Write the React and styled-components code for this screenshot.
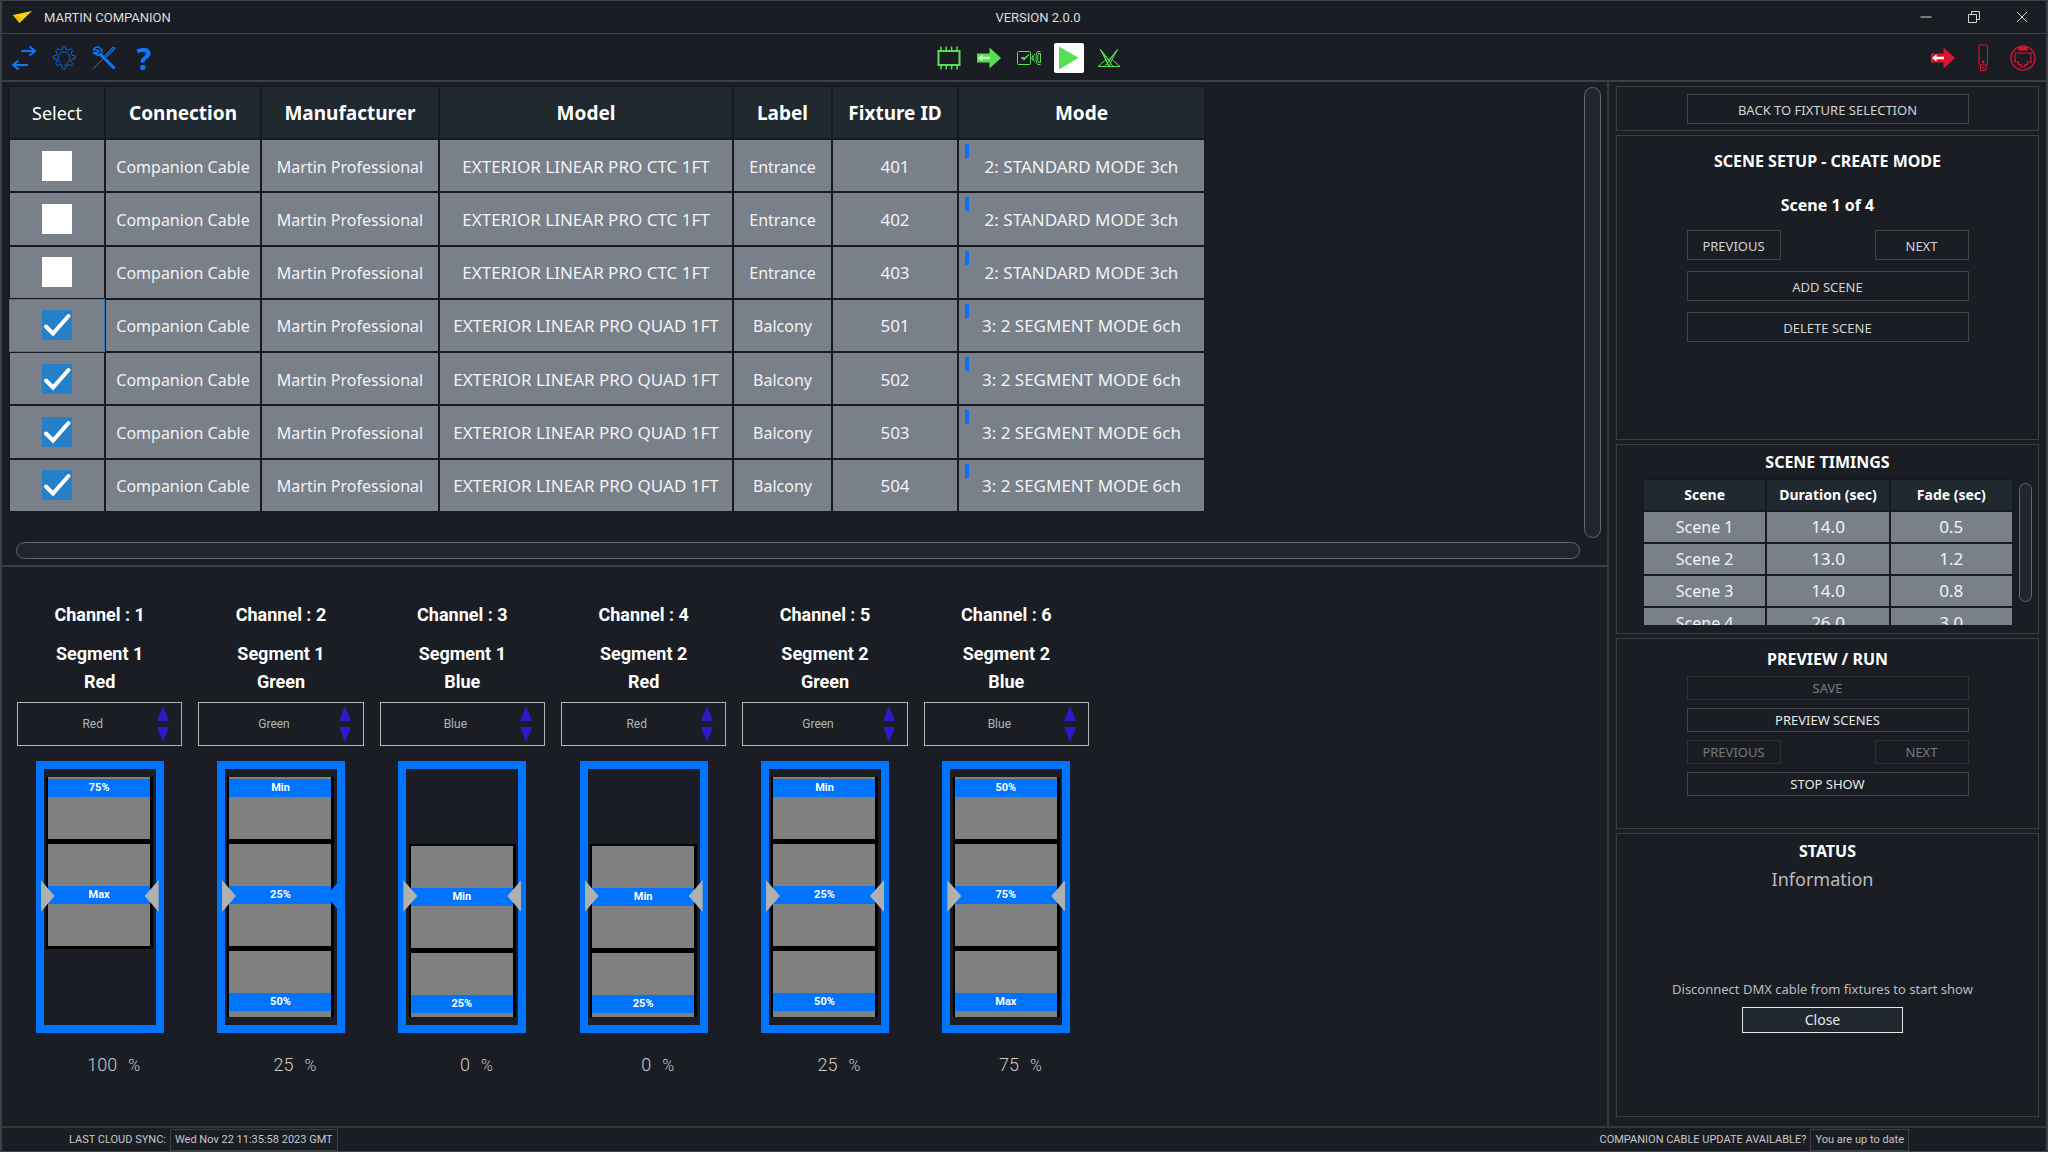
import React, { useState } from 'react'
import styled, { createGlobalStyle } from 'styled-components'

const fixtureColumns = [
  { name: 'Connection', width: 154 },
  { name: 'Manufacturer', width: 176 },
  { name: 'Model', width: 292 },
  { name: 'Label', width: 97 },
  { name: 'Fixture ID', width: 124 },
  { name: 'Mode', width: 245 },
]

const ctc = { model: 'EXTERIOR LINEAR PRO CTC 1FT', label: 'Entrance', mode: '2: STANDARD MODE 3ch' }
const quad = { model: 'EXTERIOR LINEAR PRO QUAD 1FT', label: 'Balcony', mode: '3: 2 SEGMENT MODE 6ch' }

const fixtures = [
  { id: 401, ...ctc },
  { id: 402, ...ctc },
  { id: 403, ...ctc },
  { id: 501, ...quad },
  { id: 502, ...quad },
  { id: 503, ...quad },
  { id: 504, ...quad },
]

const channels = [
  { no: 1, segment: 1, color: 'Red', value: 100, steps: ['75%', 'Max', null] },
  { no: 2, segment: 1, color: 'Green', value: 25, steps: ['Min', '25%', '50%'], active: true },
  { no: 3, segment: 1, color: 'Blue', value: 0, steps: [null, 'Min', '25%'] },
  { no: 4, segment: 2, color: 'Red', value: 0, steps: [null, 'Min', '25%'] },
  { no: 5, segment: 2, color: 'Green', value: 25, steps: ['Min', '25%', '50%'] },
  { no: 6, segment: 2, color: 'Blue', value: 75, steps: ['50%', '75%', 'Max'] },
]

const timings = [
  { name: 'Scene 1', duration: '14.0', fade: '0.5' },
  { name: 'Scene 2', duration: '13.0', fade: '1.2' },
  { name: 'Scene 3', duration: '14.0', fade: '0.8' },
  { name: 'Scene 4', duration: '26.0', fade: '3.0' },
]

const SwapIcon = () => (
  <Icon viewBox="0 0 24 24" strokeWidth="2">
    <path d="M9 5h14M17.500 0.500 23 5l-5.500 4.500M16 19H1.500M6.500 14.500 1 19l5.500 4.500" />
  </Icon>
)

const GearIcon = () => (
  <Icon viewBox="0 0 24 24" strokeWidth="1" opacity="0.85">
    <path d="M10.200 3.200 10.800.4h2.600l.6 2.800 2.400 1 2.200-1.500 1.900 1.900-1.300 2.400 1 2.400 3 .6v2.600l-3 .6-1 2.400 1.500 2.400-1.900 1.900-2.400-1.500-1.800.8-.4 2.400-2.400 2-2-2.400.4-1.800-2-1.200-2.600 1.500-1.900-1.900 1.500-2.400-1-2.400-2.900-.6V10l2.900-.6 1-2.400-1.500-2.400 1.900-1.900 2.400 1.500z" />
    <path d="M8.500 16.800a6 6 0 1 1 6 .6l-2.500 2.600" />
  </Icon>
)

const ToolsIcon = () => (
  <Icon viewBox="0 0 24 24">
    <path d="M8 8 22.500 22.500" strokeWidth="3" />
    <path d="M1.500 3.500 3.500 1.500 6.500 0.800 10 4 9.500 8 6 9.500 1 6.500l4.500.500L7 5z" strokeWidth="1.500" />
    <path d="M1 23 12 12" strokeWidth="1" />
    <path d="M13 9.500 20.500 1.500l2.200-.3-.2 2.300-8 7.500z" strokeWidth="1" fill="#0b4fa8" />
  </Icon>
)

const ChipIcon = () => (
  <Icon viewBox="0 0 24 24" strokeWidth="2">
    <rect x="1.500" y="5" width="21" height="14" />
    <path d="M4 0.500V5M9.300 0.500V5M14.600 0.500V5M20 0.500V5M4 19v4.500M9.300 19v4.500M14.600 19v4.500M20 19v4.500" strokeWidth="1.500" />
  </Icon>
)

const ArrowIcon = ({ tail }) => (
  <Icon viewBox="0 0 24 24" stroke="none">
    <path d="M0 7.500h12.500V1.500L24 12 12.500 22.500v-6H0z" fill="currentColor" />
    <path d="M1 12 5.500 8.500v2.300H13v2.400H5.500v2.300z" fill={tail} />
  </Icon>
)

const CameraIcon = () => (
  <Icon viewBox="0 0 24 24" strokeWidth="1">
    <rect x="0.500" y="5.500" width="13" height="13" rx="1" />
    <path d="M4 11.500 7 14l5-5.500L7.500 12z" fill="currentColor" />
    <path d="M18 8a5 5 0 0 0 0 8M15.800 9.500a4 4 0 0 0 0 5M23.500 5.500h-3c-2 3.500-2 9.500 0 13h3M23.500 7.500h-2c-1 3-1 6 0 9h2z" />
  </Icon>
)

const PlayIcon = () => (
  <Icon viewBox="0 0 24 24" stroke="none">
    <path d="M2 0.500 21.500 11.800 2 23.500z" fill="currentColor" />
  </Icon>
)

const BeamIcon = () => (
  <Icon viewBox="0 0 24 24" strokeWidth="1">
    <path d="M3.500 3.500 16 20.500H8L20.500 3.500 15 13.500l8 7H12zM20.500 3.500 12 14 3.500 3.500 9 13.500l-8 7h7M16 20.500h7M9 13.500l3 7 3-7" />
  </Icon>
)

const UsbIcon = () => (
  <Icon viewBox="0 0 24 24" strokeWidth="1">
    <rect x="8" y="-1" width="8.500" height="20" rx="1" />
    <path d="M9.500 19v5.500h5.500V19M11 22h2.500" />
    <circle cx="12.200" cy="16" r="1" fill="currentColor" />
  </Icon>
)

const EthernetIcon = () => (
  <Icon viewBox="0 0 24 24" strokeWidth="1.200">
    <circle cx="12" cy="12" r="12" />
    <path d="M4 7h16v9h-3.500v2.500h-2.500V21h-4v-2.500H7.500V16H4z" />
    <path d="M8 1h8v3H8z" fill="currentColor" />
  </Icon>
)

const Channel = ({ channel }) => {
  const [color, setColor] = useState(channel.color)
  const name = `Channel : ${channel.no}`
  return (
    <ChannelBox>
      <ChannelName>{name}</ChannelName>
      <SegmentName>Segment {channel.segment}<br />{channel.color}</SegmentName>
      <ColorPick>
        <ColorSelect aria-label={`${name} color`} value={color} onChange={(e) => setColor(e.target.value)}>
          <option>Red</option>
          <option>Green</option>
          <option>Blue</option>
        </ColorSelect>
        <Arrows viewBox="0 0 12 36">
          <path d="M6 0 12 15H0zM6 36 0 21h12z" fill="#2a1bcb" />
        </Arrows>
      </ColorPick>
      <Wheel>
        <WheelTrack $atMin={channel.value === 0}>
          {channel.steps.map((step, i) => (
            <Step key={i} $empty={!step}>{step && <StepLabel>{step}</StepLabel>}</Step>
          ))}
        </WheelTrack>
        <WheelInput type="range" aria-label={`${name} level`} defaultValue={channel.value} />
        <Pointer />
        <Pointer $right $active={channel.active} />
      </Wheel>
      <Level>
        <span>{channel.value}</span>
        <Percent>%</Percent>
      </Level>
    </ChannelBox>
  )
}

const App = () => {
  const [selected, setSelected] = useState([501, 502, 503, 504])

  const toggle = (id) => {
    setSelected(selected.includes(id) ? selected.filter((el) => el !== id) : [...selected, id])
  }

  return (
    <>
      <GlobalStyle />
      <Window>
        <TitleBar>
          <Brand>
            <Logo viewBox="0 0 19 12">
              <path d="M0 4 19 0 6.500 12z" fill="#fbd20b" />
              <path d="M0 4 8 6.500 6.500 12z" fill="#eeb60c" />
            </Logo>
            MARTIN COMPANION
          </Brand>
          <Version>VERSION 2.0.0</Version>
          <WindowControls>
            <WindowButton aria-label="Minimize">
              <ControlIcon viewBox="0 0 12 12"><path d="M0.500 6h11" /></ControlIcon>
            </WindowButton>
            <WindowButton aria-label="Restore">
              <ControlIcon viewBox="0 0 12 12"><path d="M0.500 3.500h8v8h-8zM3.500 3.500v-3h8v8h-3" /></ControlIcon>
            </WindowButton>
            <WindowButton aria-label="Close window">
              <ControlIcon viewBox="0 0 12 12"><path d="M1 1l10 10M11 1 1 11" /></ControlIcon>
            </WindowButton>
          </WindowControls>
        </TitleBar>

        <Toolbar>
          <Tools $color="#0a78ff">
            <Tool aria-label="Swap"><SwapIcon /></Tool>
            <Tool aria-label="Settings"><GearIcon /></Tool>
            <Tool aria-label="Tools"><ToolsIcon /></Tool>
            <Tool aria-label="Help"><HelpMark>?</HelpMark></Tool>
          </Tools>
          <Tools $color="#55e052" $middle>
            <Tool aria-label="Fixtures"><ChipIcon /></Tool>
            <Tool aria-label="Upload"><ArrowIcon tail="#c9f7c8" /></Tool>
            <Tool aria-label="Check fixture"><CameraIcon /></Tool>
            <Tool aria-label="Play" $on><PlayIcon /></Tool>
            <Tool aria-label="Beams"><BeamIcon /></Tool>
          </Tools>
          <Tools $color="#e0142f" $end>
            <Tool aria-label="Cable status"><ArrowIcon tail="#fff" /></Tool>
            <Tool aria-label="USB status"><UsbIcon /></Tool>
            <Tool aria-label="Network status"><EthernetIcon /></Tool>
          </Tools>
        </Toolbar>

        <Main>
          <Work>
            <FixtureArea>
              <FixtureRow>
                <FixtureTable>
                  <colgroup>
                    <col width="94" />
                    {fixtureColumns.map((el) => <col key={el.name} width={el.width} />)}
                  </colgroup>
                  <thead>
                    <tr>
                      <HeadCell $light>Select</HeadCell>
                      {fixtureColumns.map((el) => <HeadCell key={el.name}>{el.name}</HeadCell>)}
                    </tr>
                  </thead>
                  <tbody>
                    {fixtures.map((el) => (
                      <tr key={el.id}>
                        <SelectCell $focus={el.id === 501}>
                          <Check>
                            <CheckInput
                              type="checkbox"
                              aria-label={`Select fixture ${el.id}`}
                              checked={selected.includes(el.id)}
                              onChange={() => toggle(el.id)}
                            />
                            {selected.includes(el.id) && (
                              <Tick viewBox="0 0 30 30"><path d="M4 16.500 11 23.500 26.500 6" /></Tick>
                            )}
                          </Check>
                        </SelectCell>
                        <Cell>Companion Cable</Cell>
                        <Cell>Martin Professional</Cell>
                        <Cell $large>{el.model}</Cell>
                        <Cell>{el.label}</Cell>
                        <Cell $large>{el.id}</Cell>
                        <Cell $large><ModeMark />{el.mode}</Cell>
                      </tr>
                    ))}
                  </tbody>
                </FixtureTable>
                <ScrollV />
              </FixtureRow>
              <ScrollH />
            </FixtureArea>
            <Channels>
              {channels.map((el) => <Channel key={el.no} channel={el} />)}
            </Channels>
          </Work>

          <Side>
            <Panel $height={45} $top={7}>
              <Buttons>
                <Button>BACK TO FIXTURE SELECTION</Button>
              </Buttons>
            </Panel>

            <Panel $height={305} $top={13}>
              <PanelTitle>SCENE SETUP - CREATE MODE</PanelTitle>
              <SceneCount>Scene 1 of 4</SceneCount>
              <Buttons>
                <ButtonPair>
                  <Button>PREVIOUS</Button>
                  <Button>NEXT</Button>
                </ButtonPair>
                <Button>ADD SCENE</Button>
                <Button>DELETE SCENE</Button>
              </Buttons>
            </Panel>

            <Panel $height={190} $top={5}>
              <PanelTitle>SCENE TIMINGS</PanelTitle>
              <TimingRow>
                <TimingView>
                  <TimingTable>
                    <thead>
                      <tr>
                        <TimingHead>Scene</TimingHead>
                        <TimingHead>Duration (sec)</TimingHead>
                        <TimingHead>Fade (sec)</TimingHead>
                      </tr>
                    </thead>
                    <tbody>
                      {timings.map((el) => (
                        <tr key={el.name}>
                          <TimingCell>{el.name}</TimingCell>
                          <TimingCell $large>{el.duration}</TimingCell>
                          <TimingCell $large>{el.fade}</TimingCell>
                        </tr>
                      ))}
                    </tbody>
                  </TimingTable>
                </TimingView>
                <TimingScroll />
              </TimingRow>
            </Panel>

            <Panel $height={191} $top={8}>
              <PanelTitle>PREVIEW / RUN</PanelTitle>
              <Buttons $compact>
                <Button $compact disabled>SAVE</Button>
                <Button $compact $bright>PREVIEW SCENES</Button>
                <ButtonPair>
                  <Button $compact disabled>PREVIOUS</Button>
                  <Button $compact disabled>NEXT</Button>
                </ButtonPair>
                <Button $compact $bright>STOP SHOW</Button>
              </Buttons>
            </Panel>

            <Panel $grow $top={5}>
              <PanelTitle>STATUS</PanelTitle>
              <Status>
                <StatusKind>Information</StatusKind>
                <StatusText>Disconnect DMX cable from fixtures to start show</StatusText>
                <CloseButton>Close</CloseButton>
              </Status>
            </Panel>
          </Side>
        </Main>

        <Footer>
          <FootItem>LAST CLOUD SYNC: <FootValue>Wed Nov 22 11:35:58 2023 GMT</FootValue></FootItem>
          <FootItem>COMPANION CABLE UPDATE AVAILABLE? <FootValue>You are up to date</FootValue></FootItem>
        </Footer>
      </Window>
    </>
  )
}

export default App

const GlobalStyle = createGlobalStyle`
  * {
    box-sizing: border-box;
  }
  body {
    margin: 0;
    background: #1a1d23;
    color: #fff;
    font-family: Roboto, "Liberation Sans", sans-serif;
  }
  button, select {
    font: inherit;
    color: inherit;
  }
`
const Window = styled.div`
  min-height: 100vh;
  display: flex;
  flex-direction: column;
  border: solid #3d4147;
  border-width: 1px 2px;
`
const TitleBar = styled.header`
  height: 33px;
  display: grid;
  grid-template-columns: 1fr auto 1fr;
  align-items: center;
  border-bottom: 1px solid #43474c;
  font-size: 13px;
  color: #dcdddf;
`
const Brand = styled.div`
  display: flex;
  align-items: center;
  gap: 12px;
  padding-left: 11px;
`
const Logo = styled.svg`
  width: 19px;
  height: 12px;
`
const Version = styled.div`
  padding-left: 28px;
`
const WindowControls = styled.div`
  display: flex;
  justify-content: flex-end;
`
const WindowButton = styled.button`
  width: 48px;
  height: 32px;
  padding: 0;
  border: none;
  background: none;
`
const ControlIcon = styled.svg`
  width: 12px;
  height: 12px;
  display: block;
  margin: auto;
  fill: none;
  stroke: #d5d6d8;
`
const Toolbar = styled.div`
  height: 48px;
  display: grid;
  grid-template-columns: 1fr auto 1fr;
  align-items: center;
  padding: 1px 8px 0 7px;
  border-bottom: 2px solid #3d4147;
`
const Tools = styled.div`
  display: flex;
  gap: 10px;
  justify-content: ${(p) => (p.$end ? 'flex-end' : 'flex-start')};
  padding-left: ${(p) => (p.$middle ? 10 : 0)}px;
  color: ${(p) => p.$color};
`
const Tool = styled.button`
  width: 30px;
  height: 30px;
  padding: 0;
  border: none;
  border-radius: 2px;
  display: flex;
  align-items: center;
  justify-content: center;
  background: ${(p) => (p.$on ? '#fff' : 'none')};
`
const Icon = styled.svg.attrs((p) => ({ fill: 'none', stroke: p.stroke || 'currentColor' }))`
  width: 24px;
  height: 24px;
  overflow: visible;
`
const HelpMark = styled.span`
  font: bold 31px/30px "Noto Sans", sans-serif;
`
const Main = styled.main`
  flex: 1;
  display: flex;
`
const Work = styled.section`
  flex: 1;
  min-width: 0;
`
const FixtureArea = styled.div`
  padding: 3px 6px 6px;
  border-bottom: 2px solid #3d4147;
`
const FixtureRow = styled.div`
  display: flex;
  justify-content: space-between;
  min-height: 453px;
  margin-bottom: 4px;
`
const FixtureTable = styled.table`
  table-layout: fixed;
  width: 1198px;
  height: 428px;
  border-spacing: 2px;
  background: #161b23;
  font-family: "Noto Sans", "Liberation Sans", sans-serif;
`
const HeadCell = styled.th`
  height: 51px;
  padding: 0;
  background: #202830;
  font-size: ${(p) => (p.$light ? 18 : 19)}px;
  font-weight: ${(p) => (p.$light ? 400 : 700)};
`
const Cell = styled.td`
  position: relative;
  padding: 2px 0 0;
  background: #7a808a;
  color: #f2f3f5;
  font-size: ${(p) => (p.$large ? 17 : 16)}px;
  line-height: 24px;
  text-align: center;
  white-space: nowrap;
`
const SelectCell = styled(Cell)`
  padding: 0;
  outline: ${(p) => (p.$focus ? '1px solid #2c7cb9' : 'none')};
`
const Check = styled.div`
  display: grid;
  justify-content: center;
`
const CheckInput = styled.input`
  appearance: none;
  grid-area: 1 / 1;
  width: 30px;
  height: 30px;
  margin: 0;
  background: #fff;
  &:checked {
    background: #2580c8;
  }
`
const Tick = styled.svg`
  grid-area: 1 / 1;
  width: 30px;
  height: 30px;
  fill: none;
  stroke: #fff;
  stroke-width: 4;
  stroke-linecap: round;
  pointer-events: none;
`
const ModeMark = styled.span`
  position: absolute;
  top: 4px;
  left: 6px;
  width: 4px;
  height: 14px;
  background: #1072f2;
`
const Thumb = styled.div`
  border: 1px solid #646a70;
  border-radius: 9px;
  background: #20262e;
`
const ScrollV = styled(Thumb)`
  width: 17px;
  margin-top: 2px;
`
const ScrollH = styled(Thumb)`
  height: 17px;
  margin: 0 21px 0 8px;
`
const Channels = styled.div`
  display: grid;
  grid-template-columns: repeat(6, 1fr);
  gap: 16px;
  max-width: 1087px;
  padding: 36px 0 0 15px;
`
const ChannelBox = styled.div`
  display: flex;
  flex-direction: column;
  align-items: center;
  font-size: 18px;
  text-align: center;
`
const ChannelName = styled.div`
  font-weight: 700;
  line-height: 24px;
  margin-bottom: 13px;
`
const SegmentName = styled.div`
  font-weight: 700;
  line-height: 28px;
  margin-bottom: 6px;
`
const ColorPick = styled.div`
  position: relative;
  width: 100%;
  margin-bottom: 15px;
`
const ColorSelect = styled.select`
  appearance: none;
  display: block;
  width: 100%;
  height: 44px;
  padding: 0 14px 0 0;
  border: 1px solid #b2b4b6;
  border-radius: 0;
  background: #1a1d23;
  color: #b4b6b8;
  font-size: 12px;
  text-align: center;
  text-align-last: center;
`
const Arrows = styled.svg`
  position: absolute;
  top: 4px;
  right: 13px;
  width: 12px;
  height: 36px;
  pointer-events: none;
`
const Wheel = styled.div`
  position: relative;
  width: 128px;
  height: 272px;
  padding: 8px 0;
  border: 8px solid #0073ff;
`
const WheelTrack = styled.div`
  height: 240px;
  display: flex;
  flex-direction: column;
  align-items: center;
  justify-content: center;
  padding-bottom: ${(p) => (p.$atMin ? 0 : 4)}px;
  overflow: hidden;
`
const Step = styled.div`
  flex: none;
  width: 107px;
  height: 107px;
  display: flex;
  flex-direction: column;
  justify-content: center;
  border: solid #000;
  border-width: 2px 3px 3px 2px;
  background: #808080;
  visibility: ${(p) => (p.$empty ? 'hidden' : 'visible')};
`
const StepLabel = styled.div`
  background: #0073ff;
  font-size: 11px;
  font-weight: 700;
  line-height: 18px;
`
const WheelInput = styled.input`
  position: absolute;
  inset: 0;
  width: 100%;
  height: 100%;
  margin: 0;
  opacity: 0;
`
const Pointer = styled.span`
  position: absolute;
  top: 111px;
  ${(p) => (p.$right ? 'right' : 'left')}: -3px;
  width: 14px;
  height: 32px;
  background: ${(p) => (p.$active ? '#0073ff' : '#b0b0b0')};
  clip-path: ${(p) => (p.$right ? 'polygon(100% 0, 100% 100%, 0 50%)' : 'polygon(0 0, 0 100%, 100% 50%)')};
  pointer-events: none;
`
const Level = styled.div`
  display: flex;
  align-items: baseline;
  gap: 11px;
  margin-top: 20px;
  padding-left: 28px;
  color: #c9cbcd;
  font-weight: 300;
  line-height: 24px;
`
const Percent = styled.span`
  font-size: 16px;
`
const Side = styled.aside`
  width: 439px;
  display: flex;
  flex-direction: column;
  gap: 4px;
  padding: 4px 7px 9px;
  border-left: 2px solid #33373c;
  font-family: "Noto Sans", "Liberation Sans", sans-serif;
`
const Panel = styled.section`
  min-height: ${(p) => p.$height || 0}px;
  flex: ${(p) => (p.$grow ? 1 : 'none')};
  padding-top: ${(p) => p.$top}px;
  border: 1px solid #3a3e42;
`
const PanelTitle = styled.h2`
  margin: 0;
  font-size: 16px;
  font-weight: 700;
  line-height: 24px;
  text-align: center;
`
const SceneCount = styled(PanelTitle).attrs({ as: 'p' })`
  margin: 20px 0 13px;
`
const Buttons = styled.div`
  width: 282px;
  display: flex;
  flex-direction: column;
  gap: ${(p) => (p.$compact ? 8 : 11)}px;
  margin: ${(p) => (p.$compact ? 5 : 0)}px auto 0;
`
const ButtonPair = styled.div`
  display: grid;
  grid-template-columns: 94px 94px;
  justify-content: space-between;
`
const Button = styled.button`
  height: ${(p) => (p.$compact ? 24 : 30)}px;
  padding: ${(p) => (p.$compact ? 0 : 2)}px 0 0;
  border: 1px solid #404448;
  background: none;
  color: ${(p) => (p.$bright ? '#e8e9ea' : '#d2d4d6')};
  font-size: 13px;
  line-height: 20px;
  cursor: pointer;
  &:disabled {
    border-color: #2b2f34;
    color: #77797c;
    cursor: default;
  }
`
const TimingRow = styled.div`
  display: flex;
  align-items: flex-start;
  gap: 5px;
  margin-top: 4px;
  padding: 0 6px 0 25px;
`
const TimingView = styled.div`
  flex: 1;
  height: 147px;
  overflow: hidden;
`
const TimingTable = styled.table`
  table-layout: fixed;
  width: 100%;
  border-spacing: 2px;
  background: #161b23;
`
const TimingHead = styled.th`
  height: 30px;
  padding: 0;
  background: #202830;
  font-size: 14px;
  line-height: 24px;
`
const TimingCell = styled.td`
  height: 30px;
  padding: 0;
  background: #7a808a;
  color: #f2f3f5;
  font-size: ${(p) => (p.$large ? 17 : 16)}px;
  line-height: 24px;
  text-align: center;
`
const TimingScroll = styled(Thumb)`
  width: 13px;
  height: 119px;
  margin-top: 5px;
`
const Status = styled.div`
  display: flex;
  flex-direction: column;
  align-items: center;
  padding: 4px 10px 0 0;
  color: #babcbe;
  line-height: 24px;
`
const StatusKind = styled.div`
  font-size: 18px;
  margin-bottom: 86px;
`
const StatusText = styled.div`
  font-size: 13px;
  margin-bottom: 6px;
`
const CloseButton = styled.button`
  width: 161px;
  height: 26px;
  padding: 0;
  border: 1px solid #e4e6e8;
  background: #20272f;
  color: #e8e9ea;
  font-size: 14px;
  line-height: 22px;
`
const Footer = styled.footer`
  height: 25px;
  display: flex;
  justify-content: space-between;
  padding: 0 137px 0 67px;
  border-top: 2px solid #33373c;
  color: #c6c8ca;
  font-size: 11px;
`
const FootItem = styled.div`
  display: flex;
  align-items: center;
  gap: 4px;
`
const FootValue = styled.span`
  padding: 0 4px;
  border: 1px solid #3a3e42;
  line-height: 20px;
`
